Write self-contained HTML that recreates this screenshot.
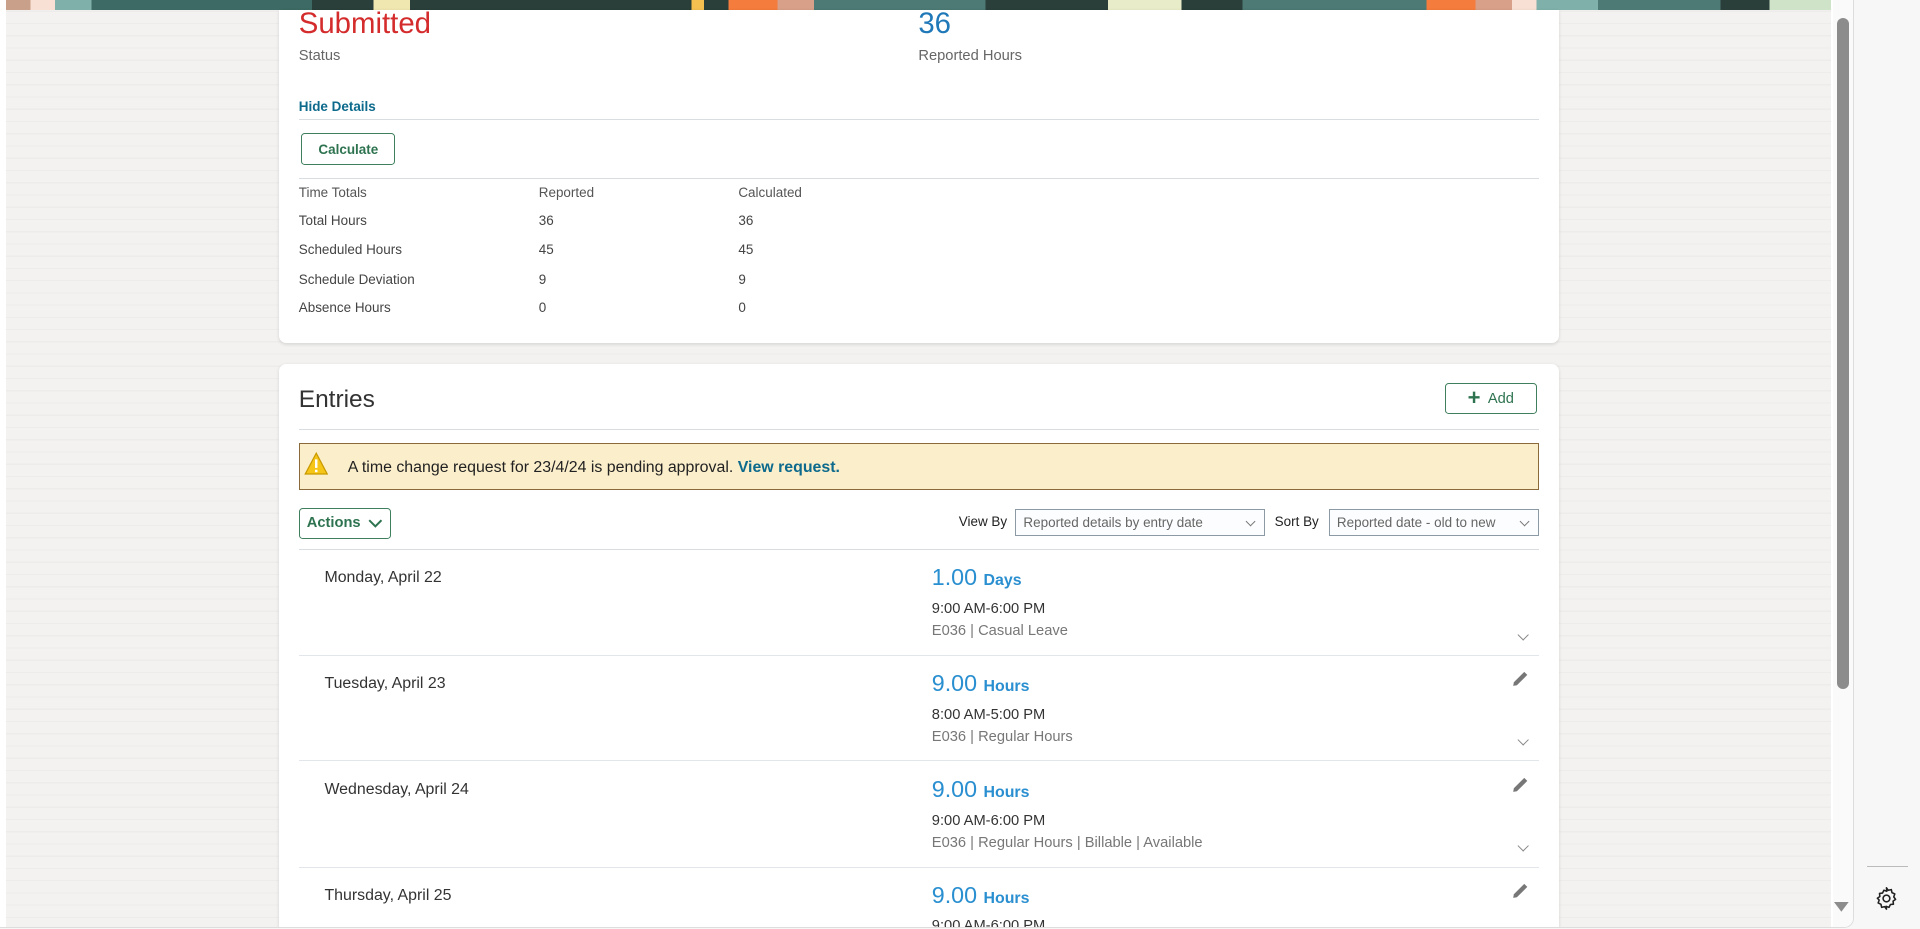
<!DOCTYPE html>
<html><head><meta charset="utf-8"><style>
html{zoom:1.22449}
body{margin:0;width:1568px;height:759px;overflow:hidden;background:#f7f7f7;font-family:"Liberation Sans",sans-serif;position:relative}
.win{position:absolute;left:0;top:0;width:1513px;height:757px;background:#fff;border-right:1px solid #ddd;border-bottom:1px solid #ddd;border-bottom-right-radius:8px;overflow:hidden}
.bg{position:absolute;left:5px;top:0;width:1490px;height:759px;background:#f3f2f0;background-image:repeating-linear-gradient(0deg,transparent 0 9px,rgba(0,0,0,.025) 9px 10px)}
.banner{position:absolute;left:5px;top:0;width:1490px;height:8px;background:linear-gradient(90deg,#c9a08a 0 20px,#f9e0d4 20px 40px,#7fb0aa 40px 70px,#3d6a64 70px 250px,#2a3e3a 250px 300px,#f0e6b0 300px 330px,#2a3e3a 330px 560px,#f5c050 560px 570px,#2a3e3a 570px 590px,#f47c3c 590px 630px,#d8a088 630px 660px,#4d7a75 660px 800px,#2a3e3a 800px 900px,#e8ecc8 900px 960px,#2a3e3a 960px 1010px,#4d7a75 1010px 1160px,#f47c3c 1160px 1200px,#d8a088 1200px 1230px,#f9e0d4 1230px 1250px,#7fb0aa 1250px 1300px,#4d7a75 1300px 1400px,#2a3e3a 1400px 1440px,#cfe3c9 1440px 1490px)}
.card{position:absolute;left:228px;width:1045px;background:#fff;border-radius:0 0 6px 6px;box-shadow:0 1px 3px rgba(0,0,0,.12)}
.abs{position:absolute;white-space:nowrap}
.line{position:absolute;left:16px;right:16px;height:1px;background:#d8dde2}
.btn{position:absolute;border:1px solid #3f7f5e;border-radius:3px;color:#2e7350;font-weight:bold;font-size:11px;display:flex;align-items:center;justify-content:center;box-sizing:border-box;background:#fff}
.t{font-size:11px;color:#444}
.sel{position:absolute;border:1px solid #8c9aa6;height:22px;box-sizing:border-box;font-size:11px;color:#666;padding:4px 6px;background:#fcfdfe}
.sel:after{content:"";position:absolute;right:8px;top:6px;width:5px;height:5px;border-right:1px solid #777;border-bottom:1px solid #777;transform:rotate(45deg)}
.row{position:absolute;left:16px;right:16px;height:86px;border-bottom:1px solid #e2e6ea}
.date{position:absolute;left:21px;top:16px;font-size:13px;color:#333}
.qty{position:absolute;left:517px;top:12px;color:#2a8fd0;font-size:19px}
.qty span{font-size:13px;font-weight:bold}
.tm{position:absolute;left:517px;top:42px;font-size:12px;color:#333}
.cd{position:absolute;left:517px;top:60px;font-size:12px;color:#777}
.chev{position:absolute;right:10px;top:66px;width:6px;height:6px;border-right:1px solid #888;border-bottom:1px solid #888;transform:rotate(45deg)}
.pen{position:absolute;right:8px;top:12px}
</style></head><body>
<div class="win">
<div class="bg"></div>
<div class="banner"></div>
<div class="card" style="top:8px;height:272px">
 <div class="abs" style="left:16px;top:-2px;font-size:24px;color:#d42c2c;font-weight:300">Submitted</div>
 <div class="abs" style="left:16px;top:31px;font-size:12px;color:#666">Status</div>
 <div class="abs" style="left:522px;top:-2px;font-size:24px;color:#1f78b8">36</div>
 <div class="abs" style="left:522px;top:31px;font-size:12px;color:#666">Reported Hours</div>
 <div class="abs" style="left:16px;top:73px;font-size:11px;color:#0d6a8c;font-weight:bold">Hide Details</div>
 <div class="line" style="top:89px"></div>
 <div class="btn" style="left:18px;top:101px;width:77px;height:26px">Calculate</div>
 <div class="line" style="top:137px"></div>
 <div class="abs t" style="left:16px;top:143px;color:#555">Time Totals</div><div class="abs t" style="left:212px;top:143px;color:#555">Reported</div><div class="abs t" style="left:375px;top:143px;color:#555">Calculated</div>
 <div class="abs t" style="left:16px;top:166px">Total Hours</div><div class="abs t" style="left:212px;top:166px">36</div><div class="abs t" style="left:375px;top:166px">36</div>
 <div class="abs t" style="left:16px;top:190px">Scheduled Hours</div><div class="abs t" style="left:212px;top:190px">45</div><div class="abs t" style="left:375px;top:190px">45</div>
 <div class="abs t" style="left:16px;top:214px">Schedule Deviation</div><div class="abs t" style="left:212px;top:214px">9</div><div class="abs t" style="left:375px;top:214px">9</div>
 <div class="abs t" style="left:16px;top:237px">Absence Hours</div><div class="abs t" style="left:212px;top:237px">0</div><div class="abs t" style="left:375px;top:237px">0</div>
</div>
<div class="card" style="top:297px;height:470px;border-radius:6px">
 <div class="abs" style="left:16px;top:18px;font-size:20px;color:#333;font-weight:300">Entries</div>
 <div class="btn" style="left:952px;top:16px;width:75px;height:25px;font-weight:normal;font-size:12px"><span style="font-size:18px;font-weight:bold;margin-right:6px;line-height:12px">+</span>Add</div>
 <div class="line" style="top:53px"></div>
 <div class="abs" style="left:16px;top:65px;width:1013px;height:38px;background:#fbeecb;border:1px solid #8a6a3a;box-sizing:border-box"></div>
 <svg class="abs" style="left:20px;top:72px" width="20" height="19" viewBox="0 0 20 19"><path d="M10 1 L19 18 H1 Z" fill="#f5c518" stroke="#c99a00"/><rect x="9" y="6" width="2" height="7" fill="#fff"/><rect x="9" y="14.5" width="2" height="2" fill="#fff"/></svg>
 <div class="abs" style="left:56px;top:78px;font-size:13px;color:#222">A time change request for 23/4/24 is pending approval. <span style="color:#0d6a8c;font-weight:bold">View request.</span></div>
 <div class="btn" style="left:16px;top:118px;width:75px;height:25px;font-size:12px">Actions <svg width="12" height="8" style="margin-left:6px"><path d="M1 1 L6 6 L11 1" fill="none" stroke="#2e7350" stroke-width="1.6"/></svg></div>
 <div class="abs" style="left:555px;top:123px;font-size:11px;color:#222">View By</div>
 <div class="sel" style="left:601px;top:119px;width:204px">Reported details by entry date</div>
 <div class="abs" style="left:813px;top:123px;font-size:11px;color:#222">Sort By</div>
 <div class="sel" style="left:857px;top:119px;width:172px">Reported date - old to new</div>
 <div class="line" style="top:151px"></div>
 <div class="row" style="top:152px"><div class="date">Monday, April 22</div><div class="qty">1.00 <span>Days</span></div><div class="tm">9:00 AM-6:00 PM</div><div class="cd">E036 | Casual Leave</div><div class="chev"></div></div>
 <div class="row" style="top:238px"><div class="date">Tuesday, April 23</div><div class="qty">9.00 <span>Hours</span></div><div class="tm">8:00 AM-5:00 PM</div><div class="cd">E036 | Regular Hours</div><div class="chev"></div><svg class="pen" width="14" height="14" viewBox="0 0 14 14"><path d="M1 13 L1.5 10 L10 1.5 L12.5 4 L4 12.5 Z" fill="#777"/></svg></div>
 <div class="row" style="top:325px"><div class="date">Wednesday, April 24</div><div class="qty">9.00 <span>Hours</span></div><div class="tm">9:00 AM-6:00 PM</div><div class="cd">E036 | Regular Hours | Billable | Available</div><div class="chev"></div><svg class="pen" width="14" height="14" viewBox="0 0 14 14"><path d="M1 13 L1.5 10 L10 1.5 L12.5 4 L4 12.5 Z" fill="#777"/></svg></div>
 <div class="row" style="top:411px;border:none"><div class="date">Thursday, April 25</div><div class="qty">9.00 <span>Hours</span></div><div class="tm">9:00 AM-6:00 PM</div><svg class="pen" width="14" height="14" viewBox="0 0 14 14"><path d="M1 13 L1.5 10 L10 1.5 L12.5 4 L4 12.5 Z" fill="#777"/></svg></div>
</div>
<div class="abs" style="left:1497px;top:0;width:16px;height:759px;background:#fafafa"></div>
<div class="abs" style="left:1500px;top:15px;width:10px;height:548px;background:#8c8c8c;border-radius:5px"></div>
<svg class="abs" style="left:1498px;top:737px" width="12" height="9"><path d="M0 0 H12 L6 8 Z" fill="#8c8c8c"/></svg>
</div>
<div class="abs" style="left:1525px;top:707px;width:33px;height:1px;background:#bbb"></div>
<svg class="abs" style="left:1530px;top:723px" width="22" height="22" viewBox="0 0 24 24"><path d="M12 2.5l1.6 2.2 2.7-.6.6 2.7 2.5 1.2-.9 2.6 1.6 2.2-2.2 1.6.3 2.7-2.7.3-1.2 2.5-2.6-.9L12 21.5l-1.6-2.2-2.7.6-.6-2.7-2.5-1.2.9-2.6L3.9 11.8l2.2-1.6-.3-2.7 2.7-.3L9.7 4.7l2.6.9z" fill="none" stroke="#222" stroke-width="1.4" stroke-linejoin="round"/><circle cx="12" cy="12" r="3" fill="none" stroke="#222" stroke-width="1.4"/></svg>
</body></html>
